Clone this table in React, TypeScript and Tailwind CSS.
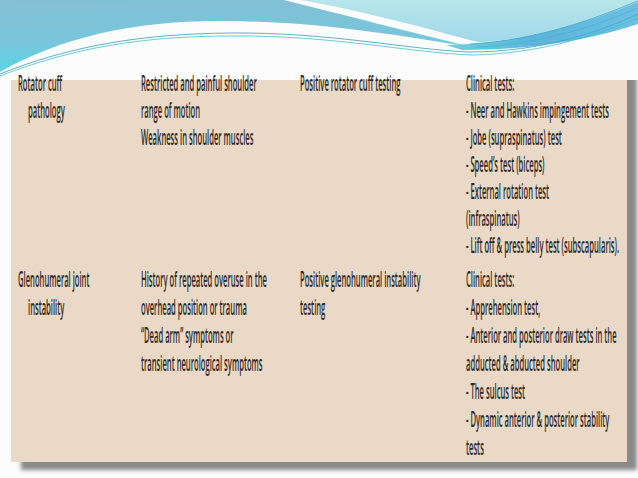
import React from "react";

function Lines({ lines, indentRest }: { lines: string[]; indentRest?: boolean }) {
  return (
    <div className="flex flex-col">
      {lines.map((l, i) => (
        <div key={i} className={indentRest && i > 0 ? "pl-[10px]" : ""}>
          <div className="whitespace-nowrap origin-left scale-x-[0.363]">{l}</div>
        </div>
      ))}
    </div>
  );
}

const row1 = {
  c1: ["Rotator cuff", "pathology"],
  c2: ["Restricted and painful shoulder", "range of motion", "Weakness in shoulder muscles"],
  c3: ["Positive rotator cuff testing"],
  c4: [
    "Clinical tests:",
    "- Neer and Hawkins impingement tests",
    "- Jobe (supraspinatus) test",
    "- Speed\u2019s test (biceps)",
    "- External rotation test",
    "(infraspinatus)",
    "- Lift off & press belly test (subscapularis).",
  ],
};

const row2 = {
  c1: ["Glenohumeral joint", "instability"],
  c2: [
    "History of repeated overuse in the",
    "overhead position or trauma",
    "\u201cDead arm\u201d symptoms or",
    "transient neurological symptoms",
  ],
  c3: ["Positive glenohumeral instability", "testing"],
  c4: [
    "Clinical tests:",
    "- Apprehension test,",
    "- Anterior and posterior draw tests in the",
    "adducted & abducted shoulder",
    "- The sulcus test",
    "- Dynamic anterior & posterior stability",
    "tests",
  ],
};

function Header() {
  return (
    <svg width="638" height="68" viewBox="0 0 638 68" className="block overflow-visible">
      <defs>
        <linearGradient id="gBlue" x1="0" y1="0" x2="0.15" y2="1">
          <stop offset="0" stopColor="#84bfd4" />
          <stop offset="0.6" stopColor="#78c6db" />
          <stop offset="1" stopColor="#56d6e6" />
        </linearGradient>
        <linearGradient id="gAqua" x1="0" y1="0" x2="0" y2="1">
          <stop offset="0" stopColor="#b8e6e9" />
          <stop offset="1" stopColor="#a0d8ea" />
        </linearGradient>
        <linearGradient id="gSwoosh" x1="0" y1="0" x2="1" y2="0">
          <stop offset="0" stopColor="#72cfdc" />
          <stop offset="0.45" stopColor="#5cb4dc" />
          <stop offset="1" stopColor="#6cc0e2" />
        </linearGradient>
      </defs>
      <rect x="0" y="0" width="638" height="80" fill="#fcfcfd" />
      <path
        d="M0,0 L284,0 C340,14 410,32 472,47 C400,36 320,21 220,21 C130,21 60,38 0,72 Z"
        fill="url(#gBlue)"
      />
      <path
        d="M300,0 L638,0 L638,2 C606,16 570,30 530,36 C505,40 490,42 478,42 C430,30 370,12 300,0 Z"
        fill="url(#gAqua)"
      />
      <path
        d="M446,45 C500,44 560,34 638,2 L638,24 C590,40 530,50 462,50 Z"
        fill="url(#gSwoosh)"
      />
      <path
        d="M0,74 C70,46 140,34 230,33 C330,32 410,50 470,52 C540,52 600,32 638,14"
        fill="none"
        stroke="#4aa8c6"
        strokeWidth="0.9"
      />
      <path
        d="M0,76 C72,48 142,36 232,36 C332,35 412,53 472,55 C540,54 600,34 638,18"
        fill="none"
        stroke="#3fc3c8"
        strokeWidth="0.8"
      />
      <path d="M470,44 C540,40 596,18 638,1" fill="none" stroke="#3fa6c6" strokeWidth="0.8" />
      <path d="M476,47 C546,44 600,24 638,8" fill="none" stroke="#48b0cc" strokeWidth="0.7" />
    </svg>
  );
}

export default function App() {
  return (
    <div className="w-[638px] h-[478px] overflow-hidden bg-[#fcfcfd] relative">
      <Header />
      <div
        className="ml-[11px] w-[616px] h-[394px] bg-[#ebd9c8] shadow-[10px_8px_4px_rgba(60,60,60,0.6)] pt-[2px] pl-[7px] text-[#2e2925] text-[21px] font-semibold"
        style={{ fontFamily: '"Open Sans", "Noto Sans", sans-serif' }}
      >
        <div className="grid grid-cols-[123px_159px_166px_1fr] leading-[27px]">
          <Lines lines={row1.c1} indentRest />
          <Lines lines={row1.c2} />
          <Lines lines={row1.c3} />
          <Lines lines={row1.c4} />
        </div>
        <div className="grid grid-cols-[123px_159px_166px_1fr] leading-[28px] mt-[6px]">
          <Lines lines={row2.c1} indentRest />
          <Lines lines={row2.c2} />
          <Lines lines={row2.c3} />
          <Lines lines={row2.c4} />
        </div>
      </div>
    </div>
  );
}
